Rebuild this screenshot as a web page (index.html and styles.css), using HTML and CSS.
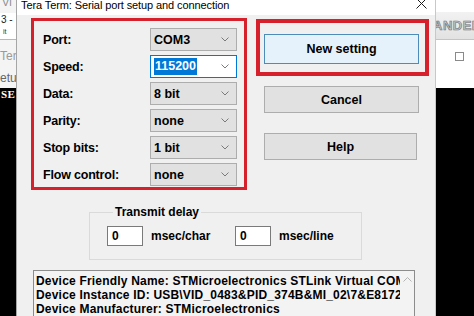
FILE: index.html
```html
<html>
  <head>
    <title>Tera Term: Serial port setup and connection</title>
    <link rel="stylesheet" href="styles.css">
  </head>
  <body>
    <div class="screen">
      <div class="side side-left">
        <div class="behind">
          <span class="frag frag-vi">Vi</span>
          <span class="frag frag-com">3 -</span>
          <span class="frag frag-it">it</span>
          <span class="frag frag-ter">Ter</span>
          <span class="frag frag-setu">etu</span>
        </div>
        <div class="console"><span class="console-text">SE</span></div>
      </div>

      <div class="dialog">
        <div class="titlebar">
          <span class="title">Tera Term: Serial port setup and connection</span>
          <svg class="close" width="11" height="11" viewBox="0 0 11 11">
            <path d="M0.5 0.5 L10.5 10.5 M10.5 0.5 L0.5 10.5" stroke="#1a1a1a" stroke-width="1" fill="none"/>
          </svg>
        </div>

        <div class="dialog-body">
          <div class="top">
            <div class="settings mark">
              <label class="field-label">Port:</label>
              <div class="combo"><span>COM3</span><svg class="chev" width="8" height="5" viewBox="0 0 8 5"><path d="M0.5 0.5 L4 4 L7.5 0.5" stroke="#7a7a7a" fill="none"/></svg></div>

              <label class="field-label">Speed:</label>
              <div class="combo combo-focus"><span class="selected">115200</span><svg class="chev" width="8" height="5" viewBox="0 0 8 5"><path d="M0.5 0.5 L4 4 L7.5 0.5" stroke="#7a7a7a" fill="none"/></svg></div>

              <label class="field-label">Data:</label>
              <div class="combo"><span>8 bit</span><svg class="chev" width="8" height="5" viewBox="0 0 8 5"><path d="M0.5 0.5 L4 4 L7.5 0.5" stroke="#7a7a7a" fill="none"/></svg></div>

              <label class="field-label">Parity:</label>
              <div class="combo"><span>none</span><svg class="chev" width="8" height="5" viewBox="0 0 8 5"><path d="M0.5 0.5 L4 4 L7.5 0.5" stroke="#7a7a7a" fill="none"/></svg></div>

              <label class="field-label">Stop bits:</label>
              <div class="combo"><span>1 bit</span><svg class="chev" width="8" height="5" viewBox="0 0 8 5"><path d="M0.5 0.5 L4 4 L7.5 0.5" stroke="#7a7a7a" fill="none"/></svg></div>

              <label class="field-label">Flow control:</label>
              <div class="combo"><span>none</span><svg class="chev" width="8" height="5" viewBox="0 0 8 5"><path d="M0.5 0.5 L4 4 L7.5 0.5" stroke="#7a7a7a" fill="none"/></svg></div>
            </div>

            <div class="actions">
              <div class="primary-frame mark">
                <button class="btn btn-primary">New setting</button>
              </div>
              <button class="btn btn-cancel">Cancel</button>
              <button class="btn btn-help">Help</button>
            </div>
          </div>

          <fieldset class="delay">
            <legend>Transmit delay</legend>
            <div class="delay-row">
              <div class="delay-item delay-item-first">
                <div class="num-box">0</div>
                <span>msec/char</span>
              </div>
              <div class="delay-item">
                <div class="num-box">0</div>
                <span>msec/line</span>
              </div>
            </div>
          </fieldset>

          <div class="device-info">
            <div class="device-lines">
              <div>Device Friendly Name: STMicroelectronics STLink Virtual COM Port (COM3)</div>
              <div>Device Instance ID: USB\VID_0483&amp;PID_374B&amp;MI_02\7&amp;E8172D</div>
              <div>Device Manufacturer: STMicroelectronics</div>
            </div>
            <div class="scrollbar">
              <svg width="9" height="5" viewBox="0 0 9 5"><path d="M0.5 4.5 L4.5 0.5 L8.5 4.5" stroke="#b4b4b4" fill="none"/></svg>
            </div>
          </div>
        </div>
      </div>

      <div class="side side-right">
        <div class="behind behind-right">
          <div class="logo-band"><span class="logo">ANDER</span></div>
          <div class="check-row"><span class="checkbox"></span></div>
        </div>
        <div class="console"></div>
      </div>
    </div>
  </body>
</html>
```

FILE: styles.css
```css
:root {
  --dialog-bg: #f0f0f0;
  --mark-red: #d6202c;
  --btn-bg: #e1e1e1;
  --btn-border: #adadad;
  --focus-blue: #0078d7;
}

body {
  margin: 0;
  background: #000;
}

.screen {
  width: 474px;
  height: 316px;
  display: flex;
  overflow: hidden;
  font-family: "Liberation Sans", Arial, sans-serif;
  color: #000;
}

/* windows lying behind the dialog */
.side {
  flex: none;
  display: flex;
  flex-direction: column;
  overflow: hidden;
}
.side-left {
  width: 16px;
}
.side-right {
  width: 38px;
}
.behind {
  height: 88px;
  flex: none;
  background: #f4f4f4;
  display: flex;
  flex-direction: column;
  overflow: hidden;
}
.console {
  flex: 1;
  background: #000;
}
.console-text {
  display: block;
  color: #fff;
  font-family: "Liberation Serif", serif;
  font-weight: bold;
  font-size: 11px;
  line-height: 12px;
  padding: 0 0 0 1px;
  letter-spacing: 0.5px;
}
.frag {
  display: block;
  white-space: nowrap;
  font-size: 11px;
  line-height: 12px;
}
.frag-vi {
  color: #8c8c8c;
  margin-top: -4px;
  padding-left: 2px;
}
.frag-com {
  color: #222;
  background: #fff;
  margin-top: 5px;
  padding: 1px 0 0 1px;
  font-size: 10px;
}
.frag-it {
  font-size: 7px;
  line-height: 8px;
  color: #333;
  background: #fff;
  padding: 2px 0 3px 3px;
  border-bottom: 1px solid #b8b8b8;
}
.frag-ter {
  color: #9a9a9a;
  font-size: 12px;
  margin-top: 10px;
}
.frag-setu {
  color: #666;
  font-size: 12px;
  margin-top: 10px;
}

.behind-right {
  background: #fff;
}
.logo-band {
  margin-top: 12px;
  height: 27px;
  background: linear-gradient(#f2f2f2, #e2e2e2);
  border-bottom: 1px solid #c4c4c4;
  display: flex;
  align-items: center;
}
.logo {
  margin-left: -3px;
  font-weight: bold;
  font-size: 13px;
  letter-spacing: 0.5px;
  color: #c8c8c8;
  -webkit-text-stroke: 0.6px #6e6e6e;
}
.check-row {
  padding: 12px 0 0 19px;
}
.checkbox {
  display: block;
  width: 7px;
  height: 7px;
  border: 1px solid #8a8a8a;
  background: #fff;
}

/* the dialog */
.dialog {
  width: 420px;
  flex: none;
  box-sizing: border-box;
  border-left: 1px solid #a6a6a6;
  border-right: 1px solid #c8c8c8;
  background: var(--dialog-bg);
  display: flex;
  flex-direction: column;
}
.titlebar {
  height: 15px;
  flex: none;
  background: #fff;
  display: flex;
  align-items: flex-start;
  overflow: hidden;
}
.title {
  font-size: 11px;
  line-height: 12px;
  letter-spacing: -0.1px;
  margin: -1px 0 0 4px;
  white-space: nowrap;
}
.close {
  margin: -2px 8px 0 auto;
}

.dialog-body {
  padding: 3px 0 0 14px;
  font-weight: bold;
  font-size: 12px;
}
.top {
  display: flex;
  align-items: flex-start;
  gap: 9px;
}
.mark {
  border: 3px solid var(--mark-red);
}
.settings {
  width: 216px;
  box-sizing: border-box;
  padding: 7px 7px 1px 9px;
  display: grid;
  grid-template-columns: 1fr 87px;
  grid-auto-rows: 23px;
  row-gap: 4px;
}
.field-label {
  display: flex;
  align-items: center;
  letter-spacing: -0.2px;
  font-size: 12.5px;
}
.combo {
  box-sizing: border-box;
  background: var(--btn-bg);
  border: 1px solid var(--btn-border);
  display: flex;
  align-items: center;
  padding: 0 7px 0 3px;
  font-size: 12.5px;
}
.combo span {
  flex: 1;
}
.combo-focus {
  background: #fff;
  border-color: var(--focus-blue);
}
.combo-focus .selected {
  flex: none;
  background: var(--focus-blue);
  color: #fff;
  line-height: 17px;
  padding: 0 1px;
  margin-right: auto;
}
.chev {
  flex: none;
}

.actions {
  display: flex;
  flex-direction: column;
  align-items: flex-start;
}
.primary-frame {
  border-width: 4px;
  width: 173px;
  box-sizing: border-box;
  margin-top: 1px;
  padding: 11px 6px 8px 4px;
}
.btn {
  box-sizing: border-box;
  font-family: inherit;
  font-weight: bold;
  font-size: 12.5px;
  color: #000;
  background: var(--btn-bg);
  border: 1px solid var(--btn-border);
  border-radius: 0;
  width: 155px;
  height: 27px;
  padding: 0;
}
.btn-primary {
  height: 30px;
  background: #e5f1fb;
  border-color: #4d8bb8;
}
.btn-cancel {
  margin: 10px 0 0 8px;
}
.btn-help {
  width: 153px;
  margin: 20px 0 0 8px;
}

.delay {
  margin: 15px 0 0 58px;
  width: 273px;
  box-sizing: border-box;
  border: 1px solid #dadada;
  padding: 7px 0 13px 17px;
  min-width: 0;
}
.delay legend {
  margin-left: 6px;
  padding: 0 2px;
  line-height: 14px;
}
.delay-row {
  display: flex;
  align-items: center;
}
.delay-item {
  display: flex;
  align-items: center;
  gap: 8px;
}
.delay-item-first {
  width: 128px;
}
.num-box {
  width: 36px;
  height: 20px;
  box-sizing: border-box;
  background: #fff;
  border: 1px solid #7a7a7a;
  padding: 2px 0 0 4px;
  line-height: 15px;
}

.device-info {
  margin: 10px 0 0 2px;
  width: 382px;
  height: 60px;
  box-sizing: border-box;
  border: 1px solid #8c8c8c;
  background: #f3f3f3;
  display: flex;
}
.device-lines {
  flex: 1;
  overflow: hidden;
  white-space: nowrap;
  padding: 3px 0 0 2px;
  line-height: 14px;
  letter-spacing: 0.2px;
}
.scrollbar {
  width: 14px;
  flex: none;
  display: flex;
  justify-content: center;
  padding-top: 6px;
  box-sizing: border-box;
}
.scrollbar svg {
  display: block;
}
```
